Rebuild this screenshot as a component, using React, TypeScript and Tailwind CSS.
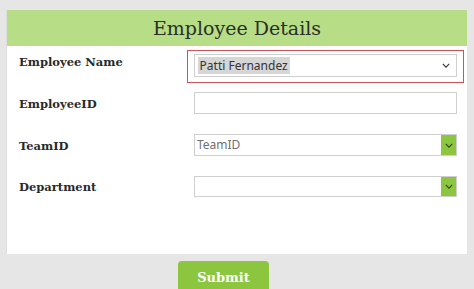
import React from "react";

const serif = { fontFamily: '"DejaVu Serif", Georgia, serif' };
const sans = { fontFamily: '"Noto Sans", "Open Sans", sans-serif' };

function Chevron({ className }: { className?: string }) {
  return (
    <svg viewBox="0 0 10 6" className={className} fill="none" stroke="currentColor" strokeWidth="1.4">
      <polyline points="1,1 5,5 9,1" />
    </svg>
  );
}

function GreenSelect({ placeholder, height }: { placeholder?: string; height: string }) {
  return (
    <div className={`flex w-[263px] ${height} items-stretch border border-[#cfcfcf] bg-white`}>
      <div className="flex flex-1 items-center pl-[2px] text-[12px] text-[#6f6f6f]" style={sans}>
        {placeholder}
      </div>
      <div className="flex w-[15px] items-center justify-center bg-[#8cc63e] text-[#2e4a12]">
        <Chevron className="h-[5px] w-[8px]" />
      </div>
    </div>
  );
}

export default function App() {
  return (
    <div className="h-[289px] w-[474px] overflow-hidden bg-[#e6e6e6] pl-[6px] pr-[7px] pt-[10px]">
      <div className="h-[244px] border-l border-[#dcdcdc] bg-white">
        <div
          className="flex h-[36px] items-center justify-center bg-[#b7dd87] text-[19px] text-[#2b2f27]"
          style={serif}
        >
          Employee Details
        </div>

        <div className="pl-[12px] pr-[3px] pt-[4px]">
          {/* Employee Name */}
          <div className="flex items-start">
            <div className="mt-[4px] w-[168px] text-[11.5px] font-bold text-[#2a2a2a]" style={serif}>
              Employee Name
            </div>
            <div className="h-[33px] w-[278px] border border-[#c9545c] px-[6px] pt-[3px]">
              <div className="flex h-[23px] items-center border border-[#cfcfcf] bg-white pl-[3px] pr-[6px]">
                <span
                  className="bg-[#d6d6d6] px-[2px] text-[12px] leading-[17px] text-[#333]"
                  style={sans}
                >
                  Patti Fernandez
                </span>
                <span className="flex-1" />
                <Chevron className="h-[5px] w-[8px] text-[#333]" />
              </div>
            </div>
          </div>

          {/* EmployeeID */}
          <div className="mt-[9px] flex items-center">
            <div className="w-[175px] pt-[3px] text-[11.5px] font-bold text-[#2a2a2a]" style={serif}>
              EmployeeID
            </div>
            <div className="h-[22px] w-[263px] border border-[#cfcfcf] bg-white" />
          </div>

          {/* TeamID */}
          <div className="mt-[20px] flex items-center">
            <div className="w-[175px] pt-[3px] text-[11.5px] font-bold text-[#2a2a2a]" style={serif}>
              TeamID
            </div>
            <GreenSelect placeholder="TeamID" height="h-[22px]" />
          </div>

          {/* Department */}
          <div className="mt-[20px] flex items-center">
            <div className="w-[175px] pt-[3px] text-[11.5px] font-bold text-[#2a2a2a]" style={serif}>
              Department
            </div>
            <GreenSelect height="h-[21px]" />
          </div>
        </div>
      </div>

      <button
        type="button"
        className="ml-[172px] mt-[7px] flex h-[32px] w-[91px] justify-center rounded-t-[4px] bg-[#8cc63e] pt-[7px] text-[13px] font-bold text-white"
        style={serif}
      >
        Submit
      </button>
    </div>
  );
}
